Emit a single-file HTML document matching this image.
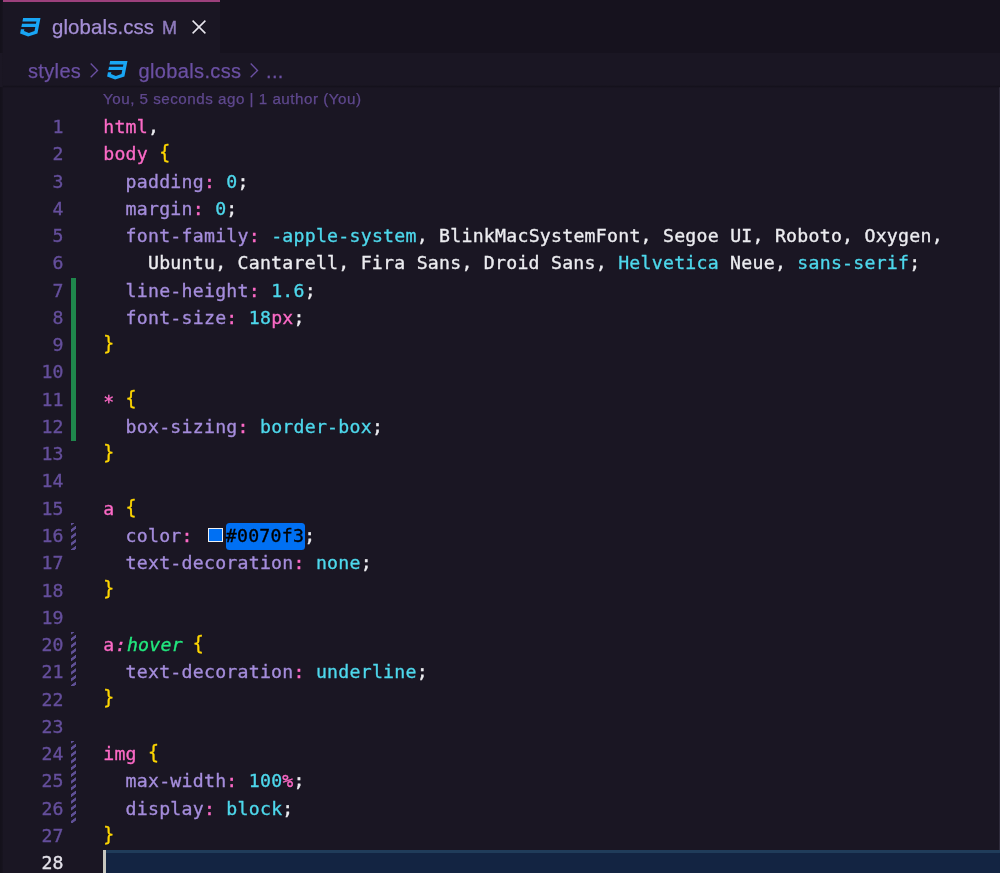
<!DOCTYPE html>
<html lang="en">
<head>
<meta charset="utf-8">
<title>globals.css</title>
<style>
*{margin:0;padding:0;box-sizing:border-box}
html,body{width:1000px;height:873px;overflow:hidden;background:#1a1623}
body{position:relative;font-family:"Liberation Sans",sans-serif;color:#a590d0;-webkit-text-stroke:.25px}
.strip{position:absolute;left:0;top:0;width:3px;height:873px;background:linear-gradient(90deg,#14111b 0,#15121c 60%,#181420 100%)}
.strip2{position:absolute;left:0;top:53px;width:3px;height:33.5px;background:linear-gradient(90deg,#1b1724 0 75%,#16131d 100%)}
.rstrip{position:absolute;left:998.6px;top:87px;width:1.4px;height:786px;background:#2f2b3b}
.tabbar{position:absolute;left:3px;top:0;width:997px;height:53.4px;background:#16121e}
.tab{position:absolute;left:0;top:0;width:217px;height:53px;background:#1a1623;border-top:2px solid #9c407c}
.tab .name{will-change:transform;position:absolute;left:49.3px;top:13.4px;font-size:20.4px;line-height:24px;letter-spacing:.12px;color:#a58fd6;white-space:nowrap}
.tab .mod{will-change:transform;position:absolute;left:159.1px;top:14.1px;font-size:18px;line-height:24px;-webkit-text-stroke:.45px;color:#8f7bbd}
.icon{position:absolute}
.crumbs{position:absolute;left:3px;top:53px;width:997px;height:33px;will-change:transform;font-size:20px;line-height:24px;letter-spacing:.35px;color:#6b50a3;white-space:nowrap}
.crumbs span{position:absolute;top:6px}
.shadow{position:absolute;left:3px;top:84.5px;width:997px;height:3px;background:linear-gradient(180deg,rgba(18,14,24,0),rgba(18,14,24,.6) 55%,rgba(18,14,24,0))}
.lens{will-change:transform;position:absolute;left:103.4px;top:90.4px;font-size:15.2px;line-height:18px;letter-spacing:.5px;color:#5f488e;white-space:nowrap}
.code{position:absolute;left:0;top:114px;width:1000px;font-family:"DejaVu Sans Mono","Liberation Mono",monospace;font-size:18.2px;letter-spacing:.245px;-webkit-text-stroke:.35px;will-change:transform}
.ln{position:absolute;left:0;width:1000px;height:27.26px;line-height:27.26px;white-space:pre}
.ln i.n{position:absolute;left:0;top:-.9px;width:63.8px;text-align:right;font-style:normal;color:#654f9c}
.ln b{position:absolute;left:103.2px;top:-1px;font-weight:normal;color:#eeeeee}
.s{color:#fc6ac6}.y{color:#ffd700;display:inline-block;transform:translateY(-1px) scaleY(1.1);transform-origin:50% 23.3px}.ast{position:relative;top:2px}.p{color:#a58ddc}.c{color:#4ed8ec}.w{color:#ececf0}.g{color:#22e87e;font-style:italic;position:relative;left:1.3px}.si{color:#fc6ac6;font-style:italic;position:relative;left:.8px}
.cur b{left:103px;top:0;right:0;height:27.26px;background:#132442;border-top:3px solid #203c5a}
.cur b::before{content:"";position:absolute;left:0;top:-3px;width:3px;height:27.26px;background:#c6c6be}
.cur i.n{color:#e4e2ea}
.sw{display:inline-block;vertical-align:top;width:15px;height:14.6px;margin:5.7px 3.1px 0 3.7px;border:1.4px solid #f0f0f0;background:#0070f3}
.sel{display:inline-block;vertical-align:top;height:27.26px;line-height:25.26px;margin-top:1px;padding-right:.5px;margin-right:-.5px;background:#0070f3;border-radius:3.5px;color:#000}
.add{position:absolute;left:71px;width:5.3px;background:#1f874c}
.hat{position:absolute;left:71px;width:5.3px;background:repeating-linear-gradient(143.7deg,#5f5096 0,#5f5096 1.8px,rgba(95,80,150,0) 2.5px,rgba(95,80,150,0) 4.7px,#5f5096 5.4px)}
</style>
</head>
<body>
<div class="strip"></div><div class="strip2"></div><div class="rstrip"></div>
<div class="tabbar">
  <div class="tab">
    <svg class="icon" style="left:14.9px;top:12.5px" width="24.6" height="24.6" viewBox="0 0 24 24"><path fill="#19a6f5" d="M5 3l-.65 3.34h13.59L17.5 8.5H3.92l-.66 3.33h13.59l-.76 3.81-5.48 1.81-4.75-1.81.33-1.64H2.85l-.79 4 7.85 3 9.05-3 1.2-6.03.24-1.21L21.94 3H5z"/></svg>
    <span class="name">globals.css</span><span class="mod">M</span>
    <svg class="icon" style="left:188px;top:17px" width="16" height="16" viewBox="0 0 16 16"><path d="M1.6 1.6l12.8 12.8M14.4 1.6L1.6 14.4" stroke="#e8e6ee" stroke-width="1.5" fill="none"/></svg>
  </div>
</div>
<div class="crumbs">
  <span style="left:25px">styles</span>
  <svg class="icon" style="left:85px;top:8px" width="12" height="19" viewBox="0 0 12 19"><path d="M2.7 2.6l6.8 6.8-6.8 6.8" stroke="#6b50a3" stroke-width="1.35" fill="none"/></svg>
  <svg class="icon" style="left:102px;top:4.6px" width="24.6" height="24.6" viewBox="0 0 24 24"><path fill="#19a6f5" d="M5 3l-.65 3.34h13.59L17.5 8.5H3.92l-.66 3.33h13.59l-.76 3.81-5.48 1.81-4.75-1.81.33-1.64H2.85l-.79 4 7.85 3 9.05-3 1.2-6.03.24-1.21L21.94 3H5z"/></svg>
  <span style="left:135.6px">globals.css</span>
  <svg class="icon" style="left:245px;top:8px" width="12" height="19" viewBox="0 0 12 19"><path d="M2.7 2.6l6.8 6.8-6.8 6.8" stroke="#6b50a3" stroke-width="1.35" fill="none"/></svg>
  <span style="left:263px">...</span>
</div>
<div class="shadow"></div>
<div class="lens">You, 5 seconds ago | 1 author (You)</div>
<div class="code" id="code">
<div class="ln" style="top:0.00px"><i class="n">1</i><b><span class="s">html</span><span class="w">,</span></b></div>
<div class="ln" style="top:27.26px"><i class="n">2</i><b><span class="s">body</span> <span class="y">{</span></b></div>
<div class="ln" style="top:54.52px"><i class="n">3</i><b>  <span class="p">padding</span><span class="s">:</span> <span class="c">0</span><span class="w">;</span></b></div>
<div class="ln" style="top:81.78px"><i class="n">4</i><b>  <span class="p">margin</span><span class="s">:</span> <span class="c">0</span><span class="w">;</span></b></div>
<div class="ln" style="top:109.04px"><i class="n">5</i><b>  <span class="p">font-family</span><span class="s">:</span> <span class="c">-apple-system</span><span class="w">, BlinkMacSystemFont, Segoe UI, Roboto, Oxygen,</span></b></div>
<div class="ln" style="top:136.30px"><i class="n">6</i><b>    <span class="w">Ubuntu, Cantarell, Fira Sans, Droid Sans, </span><span class="c">Helvetica</span><span class="w"> Neue, </span><span class="c">sans-serif</span><span class="w">;</span></b></div>
<div class="ln" style="top:163.56px"><i class="n">7</i><b>  <span class="p">line-height</span><span class="s">:</span> <span class="c">1.6</span><span class="w">;</span></b></div>
<div class="ln" style="top:190.82px"><i class="n">8</i><b>  <span class="p">font-size</span><span class="s">:</span> <span class="c">18</span><span class="s">px</span><span class="w">;</span></b></div>
<div class="ln" style="top:218.08px"><i class="n">9</i><b><span class="y">}</span></b></div>
<div class="ln" style="top:245.34px"><i class="n">10</i><b></b></div>
<div class="ln" style="top:272.60px"><i class="n">11</i><b><span class="s ast">*</span> <span class="y">{</span></b></div>
<div class="ln" style="top:299.86px"><i class="n">12</i><b>  <span class="p">box-sizing</span><span class="s">:</span> <span class="c">border-box</span><span class="w">;</span></b></div>
<div class="ln" style="top:327.12px"><i class="n">13</i><b><span class="y">}</span></b></div>
<div class="ln" style="top:354.38px"><i class="n">14</i><b></b></div>
<div class="ln" style="top:381.64px"><i class="n">15</i><b><span class="s">a</span> <span class="y">{</span></b></div>
<div class="ln" style="top:408.90px"><i class="n">16</i><b>  <span class="p">color</span><span class="s">:</span> <span class="sw"></span><span class="sel">#0070f3</span><span class="w">;</span></b></div>
<div class="ln" style="top:436.16px"><i class="n">17</i><b>  <span class="p">text-decoration</span><span class="s">:</span> <span class="c">none</span><span class="w">;</span></b></div>
<div class="ln" style="top:463.42px"><i class="n">18</i><b><span class="y">}</span></b></div>
<div class="ln" style="top:490.68px"><i class="n">19</i><b></b></div>
<div class="ln" style="top:517.94px"><i class="n">20</i><b><span class="s">a</span><span class="si">:</span><span class="g">hover</span> <span class="y">{</span></b></div>
<div class="ln" style="top:545.20px"><i class="n">21</i><b>  <span class="p">text-decoration</span><span class="s">:</span> <span class="c">underline</span><span class="w">;</span></b></div>
<div class="ln" style="top:572.46px"><i class="n">22</i><b><span class="y">}</span></b></div>
<div class="ln" style="top:599.72px"><i class="n">23</i><b></b></div>
<div class="ln" style="top:626.98px"><i class="n">24</i><b><span class="s">img</span> <span class="y">{</span></b></div>
<div class="ln" style="top:654.24px"><i class="n">25</i><b>  <span class="p">max-width</span><span class="s">:</span> <span class="c">100</span><span class="s">%</span><span class="w">;</span></b></div>
<div class="ln" style="top:681.50px"><i class="n">26</i><b>  <span class="p">display</span><span class="s">:</span> <span class="c">block</span><span class="w">;</span></b></div>
<div class="ln" style="top:708.76px"><i class="n">27</i><b><span class="y">}</span></b></div>
<div class="ln cur" style="top:736.02px"><i class="n">28</i><b></b></div>
<div class="add" style="top:163.56px;height:163.56px"></div>
<div class="hat" style="top:408.90px;height:27.26px"></div>
<div class="hat" style="top:517.94px;height:54.52px"></div>
<div class="hat" style="top:626.98px;height:81.78px"></div>
</div>
</body>
</html>
